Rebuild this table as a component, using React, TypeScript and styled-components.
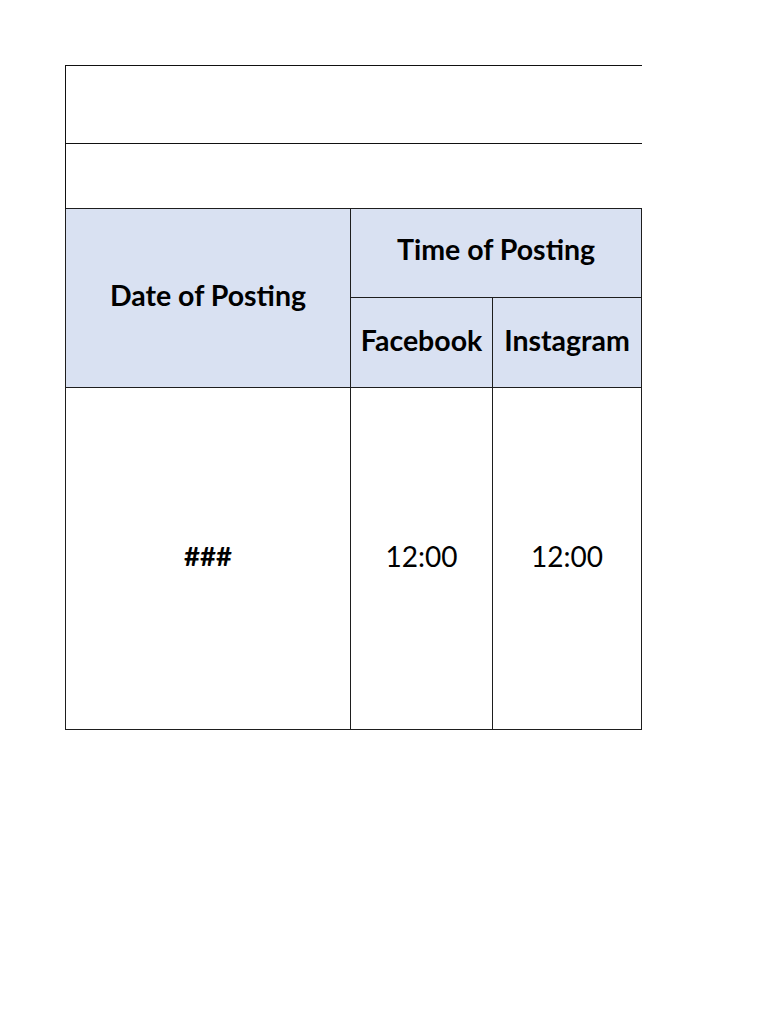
import React from "react";
import styled, { createGlobalStyle } from "styled-components";

const Global = createGlobalStyle`
  html, body { margin: 0; padding: 0; background: #ffffff; }
  body { font-family: "Lato", "Open Sans", sans-serif; color: #000; }
`;

const Page = styled.div`
  width: 768px;
  height: 1024px;
  padding: 65px 0 0 65px;
  box-sizing: border-box;
`;

const Table = styled.table`
  border-collapse: collapse;
  table-layout: fixed;
  width: 576px;
`;

const BlankCell = styled.td<{ $h: number }>`
  height: ${(p) => p.$h}px;
  padding: 0;
  border-top: 1px solid #111;
  border-left: 1px solid #111;
  border-right: none;
`;

const HeadCell = styled.td<{ $h?: number; $pb?: number }>`
  background: #d9e1f2;
  border: 1px solid #1e1e1e;
  height: ${(p) => (p.$h ?? 88) - (p.$pb ?? 0)}px;
  padding: 0 0 ${(p) => p.$pb ?? 0}px 0;
  text-align: center;
  vertical-align: middle;
  font-weight: 700;
  font-size: 28.5px;
  line-height: 1;
  letter-spacing: 0;
`;

const BodyCell = styled.td`
  border: 1px solid #1e1e1e;
  height: 336px;
  padding: 0 0 5px 0;
  text-align: center;
  vertical-align: middle;
  font-size: 28px;
  line-height: 1;
`;

const BoldBody = styled(BodyCell)`
  font-weight: 700;
  font-size: 27.5px;
`;

export default function App() {
  return (
    <>
      <Global />
      <Page>
        <Table>
          <colgroup>
            <col style={{ width: 285 }} />
            <col style={{ width: 142 }} />
            <col style={{ width: 149 }} />
          </colgroup>
          <tbody>
            <tr>
              <BlankCell colSpan={3} $h={77} />
            </tr>
            <tr>
              <BlankCell colSpan={3} $h={64} />
            </tr>
            <tr>
              <HeadCell rowSpan={2} $h={177} $pb={6}>Date of Posting</HeadCell>
              <HeadCell colSpan={2} $h={88} $pb={8}>Time of Posting</HeadCell>
            </tr>
            <tr>
              <HeadCell $h={89} $pb={4}>Facebook</HeadCell>
              <HeadCell $h={89} $pb={4}>Instagram</HeadCell>
            </tr>
            <tr>
              <BoldBody>###</BoldBody>
              <BodyCell>12:00</BodyCell>
              <BodyCell>12:00</BodyCell>
            </tr>
          </tbody>
        </Table>
      </Page>
    </>
  );
}
